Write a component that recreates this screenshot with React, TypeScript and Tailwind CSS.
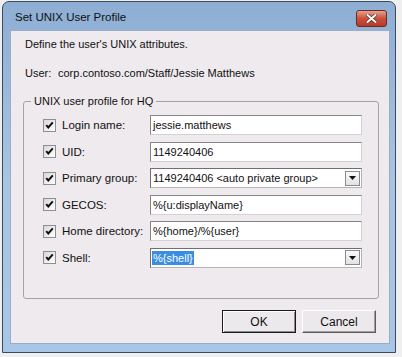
import React from "react";

const font = { fontFamily: '"Liberation Sans", Arial, sans-serif' };

function Check() {
  return (
    <div className="w-[13px] h-[13px] border border-[#8f8f8f] bg-gradient-to-br from-[#d8d8d8] to-[#ffffff] flex items-center justify-center shrink-0">
      <svg width="11" height="11" viewBox="0 0 11 11">
        <path d="M2.2 5.2 L4.3 7.5 L8.8 2.4" stroke="#111" strokeWidth="2" fill="none" />
      </svg>
    </div>
  );
}

function DropBtn() {
  return (
    <div className="w-[15px] h-[15px] mr-[1px] border border-[#8a8a8a] bg-gradient-to-b from-[#fafafa] to-[#e2e2e2] flex items-center justify-center shrink-0">
      <svg width="7" height="4" viewBox="0 0 7 4">
        <path d="M0 0 L7 0 L3.5 4 Z" fill="#111" />
      </svg>
    </div>
  );
}

function Row({
  label,
  value,
  combo,
  selected,
}: {
  label: string;
  value: string;
  combo?: boolean;
  selected?: boolean;
}) {
  return (
    <div className="h-[20px] flex items-center">
      <Check />
      <div className="ml-[6px] w-[88px] text-[11.5px] leading-[14px] text-[#111] whitespace-nowrap">{label}</div>
      <div
        className={
          "w-[212px] h-[20px] flex items-center bg-white border " +
          (combo
            ? "border-t-[#6f6f6f] border-l-[#6f6f6f] border-b-[#b5b5b5] border-r-[#b5b5b5]"
            : "border-t-[#858585] border-l-[#858585] border-b-[#d2d2d2] border-r-[#d2d2d2]")
        }
      >
        <div className="flex-1 pl-[1px] text-[11px] leading-[14px] text-[#111] whitespace-nowrap overflow-hidden">
          {selected ? (
            <span className="bg-[#3a8de0] text-white px-[1px] py-[1px]">{value}</span>
          ) : (
            <span className="pl-[1px]">{value}</span>
          )}
        </div>
        {combo && <DropBtn />}
      </div>
    </div>
  );
}

export default function App() {
  return (
    <div className="w-[402px] h-[357px] bg-[#efefef] overflow-hidden" style={font}>
      <div className="ml-[2px] mt-[1px] w-[394px] h-[352px] rounded-t-[7px] border border-[#3b4a5c] bg-gradient-to-b from-[#8eaed4] via-[#a9c3e3] to-[#a8c6e8] flex flex-col">
        <div className="h-[28px] relative flex items-center pl-[12px] pt-[3px]">
          <span className="text-[11.5px] text-[#111]">Set UNIX User Profile</span>
          <div className="absolute right-[8px] top-[8px] w-[31px] h-[17px] rounded-[3px] border border-[#6b2a22] bg-gradient-to-b from-[#e4a18e] via-[#c9503c] to-[#b83a28] flex items-center justify-center">
            <svg width="11" height="9" viewBox="0 0 11 9">
              <path d="M1.5 1 L9.5 8 M9.5 1 L1.5 8" stroke="#5a2a24" strokeWidth="3.4" strokeLinecap="round" />
              <path d="M1.5 1 L9.5 8 M9.5 1 L1.5 8" stroke="#ffffff" strokeWidth="2" strokeLinecap="round" />
            </svg>
          </div>
        </div>
        <div className="ml-[7px] mr-[5px] h-[314px] bg-[#eeeaee] border border-[#9aaec8] flex flex-col">
          <div className="pl-[14px] pt-[6px] text-[11px] leading-[14px] text-[#111]">
            Define the user's UNIX attributes.
          </div>
          <div className="pl-[14px] mt-[15px] flex text-[11px] leading-[14px] text-[#111]">
            <span className="w-[33px]">User:</span>
            <span>corp.contoso.com/Staff/Jessie Matthews</span>
          </div>
          <fieldset className="ml-[12px] mt-[14px] w-[356px] h-[205px] border border-[#a3a3a3] rounded-[3px]">
            <legend className="ml-[7px] px-[3px] text-[11px] leading-[14px] text-[#111]">
              UNIX user profile for HQ
            </legend>
            <div className="pl-[19px] pt-[7px] flex flex-col gap-[6.5px]">
              <Row label="Login name:" value="jessie.matthews" />
              <Row label="UID:" value="1149240406" />
              <Row label="Primary group:" value="1149240406 <auto private group>" combo />
              <Row label="GECOS:" value="%{u:displayName}" />
              <Row label="Home directory:" value="%{home}/%{user}" />
              <Row label="Shell:" value="%{shell}" combo selected />
            </div>
          </fieldset>
          <div className="mt-[11px] pr-[13px] flex justify-end gap-[6px]">
            <div className="w-[74px] h-[23px] border border-[#1a1a1a] bg-[#ece9ec] flex items-center justify-center shadow-[inset_1px_1px_0_#ffffff,inset_-1px_-1px_0_#8a8a8a] text-[12px] text-[#111]">
              OK
            </div>
            <div className="w-[74px] h-[23px] border border-t-[#ffffff] border-l-[#ffffff] border-b-[#5c5c5c] border-r-[#5c5c5c] bg-[#ece9ec] flex items-center justify-center shadow-[inset_-1px_-1px_0_#a0a0a0] text-[12px] text-[#111]">
              Cancel
            </div>
          </div>
        </div>
      </div>
    </div>
  );
}
